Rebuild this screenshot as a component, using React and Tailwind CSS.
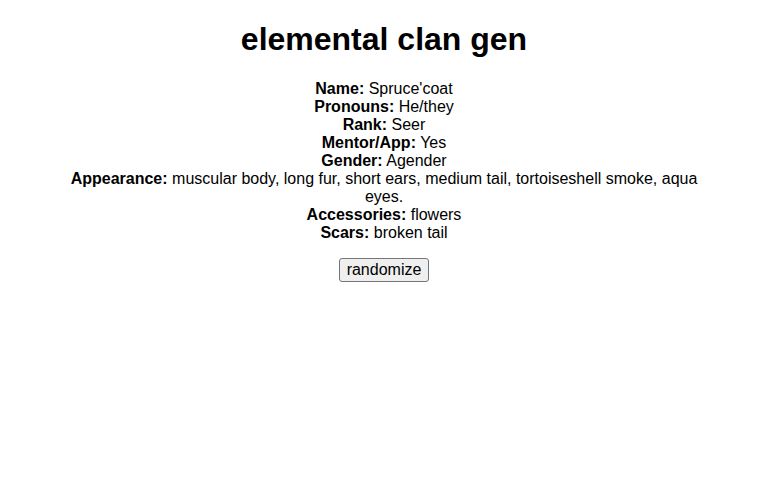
import React, { useState } from 'react';

const CAT = {
  name: "Spruce'coat",
  pronouns: 'He/they',
  rank: 'Seer',
  mentor: 'Yes',
  gender: 'Agender',
  appearance: 'muscular body, long fur, short ears, medium tail, tortoiseshell smoke, aqua eyes.',
  accessories: 'flowers',
  scars: 'broken tail',
};

const Row = ({ label, value }) => (
  <div>
    <b className="font-bold">{label}:</b> {value}
  </div>
);

export default function App() {
  const [cat, setCat] = useState(CAT);

  return (
    <div className="min-h-screen bg-white text-black text-center font-['Liberation_Sans',Arial,sans-serif]">
      <h1 className="text-[32px] font-bold leading-[37px] pt-[21px] mb-[22px]">elemental clan gen</h1>
      <div className="max-w-[650px] mx-auto text-base leading-[18px]">
        <Row label="Name" value={cat.name} />
        <Row label="Pronouns" value={cat.pronouns} />
        <Row label="Rank" value={cat.rank} />
        <Row label="Mentor/App" value={cat.mentor} />
        <Row label="Gender" value={cat.gender} />
        <Row label="Appearance" value={cat.appearance} />
        <Row label="Accessories" value={cat.accessories} />
        <Row label="Scars" value={cat.scars} />
      </div>
      <button
        onClick={() => setCat({ ...CAT })}
        className="mt-[16px] px-[7px] py-px text-base leading-[20px] bg-[#efefef] border border-[#767676] rounded-[3px] hover:bg-[#e5e5e5]"
      >
        randomize
      </button>
    </div>
  );
}
